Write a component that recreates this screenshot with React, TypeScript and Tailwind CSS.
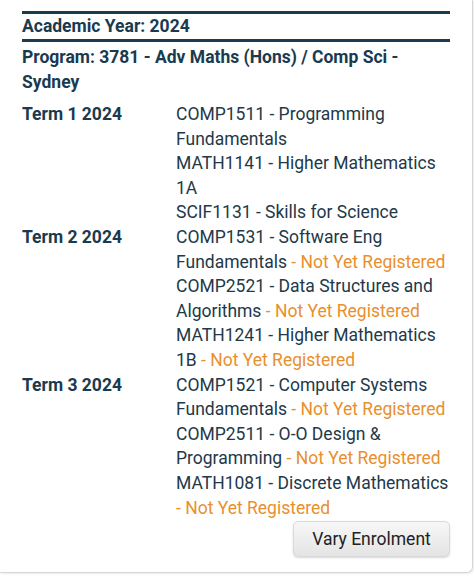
import React from "react";

const NAVY = "text-[#1a3a50]";

type Course = { text: string; nyr?: boolean };

const terms: { name: string; courses: Course[] }[] = [
  {
    name: "Term 1 2024",
    courses: [
      { text: "COMP1511 - Programming Fundamentals" },
      { text: "MATH1141 - Higher Mathematics 1A" },
      { text: "SCIF1131 - Skills for Science" },
    ],
  },
  {
    name: "Term 2 2024",
    courses: [
      { text: "COMP1531 - Software Eng Fundamentals", nyr: true },
      { text: "COMP2521 - Data Structures and Algorithms", nyr: true },
      { text: "MATH1241 - Higher Mathematics 1B", nyr: true },
    ],
  },
  {
    name: "Term 3 2024",
    courses: [
      { text: "COMP1521 - Computer Systems Fundamentals", nyr: true },
      { text: "COMP2511 - O-O Design & Programming", nyr: true },
      { text: "MATH1081 - Discrete Mathematics", nyr: true },
    ],
  },
];

export default function App() {
  return (
    <div className="w-[474px] h-[576px] bg-white overflow-hidden" style={{ fontFamily: "Roboto, 'Liberation Sans', sans-serif" }}>
      <div className="w-[473px] h-[573px] border-r border-b border-[#d6d6d6] rounded-br-[6px] shadow-[1px_1px_2px_rgba(0,0,0,0.08)] pl-[22px] pr-[16px] pt-[11px]">
        <div className="mr-[6px] border-t-[3px] border-b-[3px] border-[#1d3b50] py-[1px]">
          <div className={`text-[17.5px] leading-[23px] font-bold ${NAVY}`}>Academic Year: 2024</div>
        </div>
        <div className={`mt-[3px] text-[17.5px] leading-[25px] font-bold ${NAVY} pr-[16px]`}>
          Program: 3781 - Adv Maths (Hons) / Comp Sci - Sydney
        </div>
        <div className="mt-[7px] flex flex-col">
          {terms.map((t) => (
            <div key={t.name} className="flex">
              <div className={`w-[154px] shrink-0 text-[17.5px] leading-[24.6px] font-bold ${NAVY}`}>{t.name}</div>
              <div className="flex-1 flex flex-col">
                {t.courses.map((c) => (
                  <div key={c.text} className="text-[17.5px] leading-[24.6px] text-[#22394a]">
                    {c.text}
                    {c.nyr && <span className="text-[#e98f2d]"> - Not Yet Registered</span>}
                  </div>
                ))}
              </div>
            </div>
          ))}
        </div>
        <div className="flex justify-end mt-[1px] mr-[6px]">
          <button className="w-[157px] h-[36px] rounded-[5px] border border-[#d9d9d9] bg-gradient-to-b from-[#f7f7f7] to-[#e4e4e4] shadow-[0_1px_2px_rgba(0,0,0,0.15)] text-[17.5px] text-[#222]">
            Vary Enrolment
          </button>
        </div>
      </div>
    </div>
  );
}
